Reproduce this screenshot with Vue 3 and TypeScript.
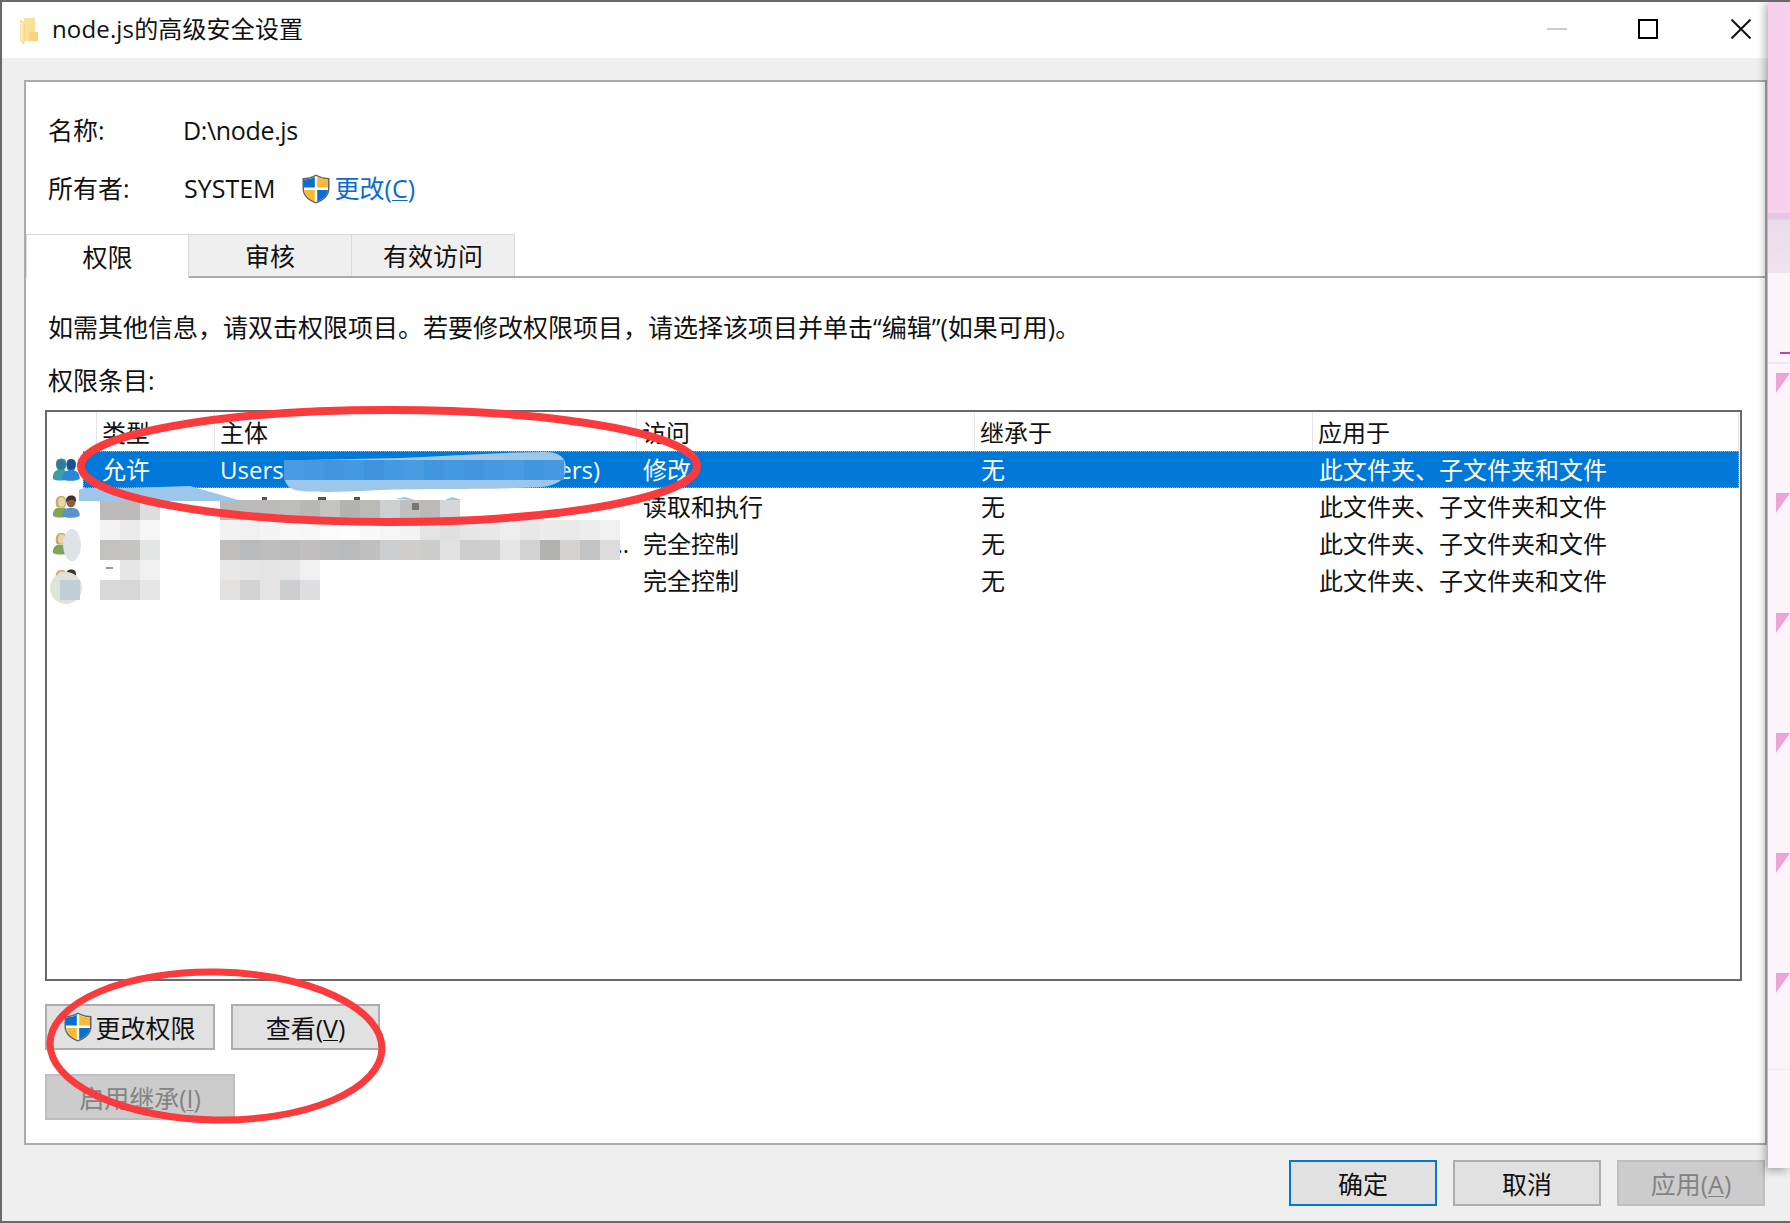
<script setup lang="ts">
import { computed } from 'vue'

interface Row { type: string; who: string; access: string; from: string; to: string; sel: boolean }
const rows: Row[] = [
  { type: '允许', who: 'Users', access: '修改', from: '无', to: '此文件夹、子文件夹和文件', sel: true },
  { type: '', who: '', access: '读取和执行', from: '无', to: '此文件夹、子文件夹和文件', sel: false },
  { type: '', who: '', access: '完全控制', from: '无', to: '此文件夹、子文件夹和文件', sel: false },
  { type: '', who: '', access: '完全控制', from: '无', to: '此文件夹、子文件夹和文件', sel: false },
]
const heads = ['类型', '主体', '访问', '继承于', '应用于']
const triangles = [373, 493, 613, 733, 853, 973]

interface Band { x: number; y: number; c: string[] }
const bands: Band[] = [
  { x: 284, y: 460, c: ['#4a9ce2','#4599e0','#4096df','#4599e0','#3f93dd','#4599e0','#4a9ce2','#4096df','#4599e0','#4196df','#4599e0','#4a9ce2','#4096df','#4599e0'] },
  { x: 100, y: 500, c: ['#bdbab9','#bcbbba','#dcdddc'] },
  { x: 220, y: 500, c: ['#bcb8b7','#bcbabb','#bdbbb9','#c0bcbc','#b9b8b7','#c5c2bf','#b3b3b2','#bcbab6','#cdd0d2','#bfc0bf','#bcb9b6','#d5d6d8'] },
  { x: 100, y: 520, c: ['#f3f3f3','#ebebeb','#f6f6f6'] },
  { x: 220, y: 520, c: ['#f2f2f2','#f0f0f0','#f4f4f4','#f8f8f8','#f6f6f6','#fbfbfb','#fdfdfd','#f9f9f9','#f5f5f5','#f4f4f4','#e4e4e4','#e0e0e0','#e6e6e6','#e8e8e8','#eeeeee','#e8e8e8','#ececec','#eaeaea','#ededed','#eff0ef'] },
  { x: 100, y: 540, c: ['#c3c2c1','#c5c4c3','#e3e4e4'] },
  { x: 220, y: 540, c: ['#c0bebd','#b9babb','#bebdbd','#bdbcbc','#c2bfc0','#bcbcbc','#b8babc','#c0c0c0','#ccced0','#cfcecc','#cccccb','#e1e1e1','#cdcdcd','#cecece','#e6e6e6','#d2d2d2','#b2b2b0','#d6d2d0','#c1c3c4','#dcdcdc'] },
  { x: 120, y: 560, c: ['#e6e6e6','#f0f0f0'] },
  { x: 220, y: 560, c: ['#e8e8e8','#e6e6e6','#e4e4e4','#e6e6e6','#f0f0f0'] },
  { x: 100, y: 580, c: ['#d9d9d9','#d7d7d7','#e6e6e6'] },
  { x: 220, y: 580, c: ['#e2e1df','#d3d3d3','#e5e4e2','#cdced0','#dfdfe1'] },
]
const cells = computed(() =>
  bands.flatMap((b, i) => b.c.map((fill, j) => ({ key: `${i}-${j}`, x: b.x + j * 20, y: b.y, fill }))),
)
</script>

<template>
  <div class="window" lang="zh-CN">
    <header class="titlebar">
      <svg class="folder" viewBox="0 0 18 26" width="18" height="26">
        <path d="M4 0 H15 V14 H18 V23 H4 Z" fill="#f5d67c" />
        <path d="M4 0 H15 V14 H9 V23 H4 Z" fill="#f9e19a" />
        <path d="M0 2 L4 4.5 V26 L0 22 Z" fill="#fcedb8" stroke="#e9c768" stroke-width="0.6" />
      </svg>
      <span class="title">node.js的高级安全设置</span>
      <div class="controls">
        <span class="ctl-min"></span>
        <span class="ctl-max"></span>
        <svg class="ctl-close" viewBox="0 0 20 20" width="20" height="20">
          <path d="M0.5 0.5 L19.5 19.5 M19.5 0.5 L0.5 19.5" stroke="#111" stroke-width="2" fill="none" />
        </svg>
      </div>
    </header>

    <main class="body">
      <section class="panel">
        <div class="meta">
          <div class="meta-row">
            <span class="meta-key">名称:</span>
            <span class="path">D:\node.js</span>
          </div>
          <div class="meta-row">
            <span class="meta-key">所有者:</span>
            <span>SYSTEM</span>
            <svg class="shield owner-shield" viewBox="0 0 28 30" width="28" height="30">
              <path d="M14 0.5 C18 3 23 4 27.5 4 V15 C27.5 22 21 27 14 29.5 C7 27 0.5 22 0.5 15 V4 C5 4 10 3 14 0.5 Z" fill="#5f6368" />
              <path d="M14 2 C18 4.4 22.4 5.3 26 5.4 V15 C26 21 20.5 25.4 14 28 C7.5 25.4 2 21 2 15 V5.4 C5.6 5.3 10 4.4 14 2 Z" fill="#fff" />
              <path d="M12.8 2.8 C9.5 4.6 5.8 5.3 2 5.4 V13.6 H12.8 Z" fill="#0a6fd0" />
              <path d="M15.2 2.8 C18.5 4.6 22.2 5.3 26 5.4 V13.6 H15.2 Z" fill="#fdb933" />
              <path d="M2 16 H12.8 V27.5 C7 25 2.4 21 2 16 Z" fill="#fdb933" />
              <path d="M15.2 16 H26 C25.6 21 21 25 15.2 27.5 Z" fill="#0a6fd0" />
            </svg>
            <a class="link">更改(<u>C</u>)</a>
          </div>
        </div>

        <nav class="tabs">
          <span class="tab active">权限</span>
          <span class="tab">审核</span>
          <span class="tab">有效访问</span>
        </nav>

        <div class="content">
          <p class="hint">如需其他信息，请双击权限项目。若要修改权限项目，请选择该项目并单击“编辑”(如果可用)。</p>
          <p class="entries">权限条目:</p>

          <div class="list">
            <div class="row head">
              <span class="cell c0"></span>
              <span v-for="(h, i) in heads" :key="h" class="cell" :class="'c' + (i + 1)">{{ h }}</span>
            </div>
            <div v-for="(r, i) in rows" :key="i" class="row item" :class="{ selected: r.sel }">
              <span class="cell c0">
                <svg viewBox="0 0 28 23" width="28" height="23">
                  <template v-if="r.sel">
                    <path d="M1 21 C0.5 15 3 12.5 6 12 C3.5 10 3.5 3 5 2 C7 0 12 0 13.5 2 C15 4 15 10 12 12 C14 12.5 16 14 16 21 C11 23 5 23 1 21 Z" fill="#3c9fa8" />
                    <ellipse cx="9" cy="6.5" rx="4.6" ry="5.2" fill="#2f7d94" />
                    <path d="M10 21.5 C10 16 11.5 14 16 12.8 C14 10 14 3 16.5 1.6 C18.5 0.6 21.5 0.8 23 2.6 C24.5 5 24 10 22 12.6 C25.5 13.4 27.6 15 27.8 21 C23 23.4 15 23.4 10 21.5 Z" fill="#2c87d6" />
                    <ellipse cx="19.2" cy="6.4" rx="4.6" ry="5.4" fill="#1d5288" />
                  </template>
                  <template v-else>
                    <path d="M1 21 C0.5 16 3 13 6.5 12.4 L11.5 12.4 C14 13 16 15 16 21 C11 23 5 23 1 21 Z" fill="#7fa653" />
                    <path d="M4 11 C3.4 6 3.4 1.6 9 0.8 C13.6 0.8 14.6 4 14 9 L13 12 H5 Z" fill="#c7ad6c" />
                    <ellipse cx="9.6" cy="7" rx="3.6" ry="4.8" fill="#eed3a8" />
                    <path d="M10.5 21.5 C10 16.5 12 14 16 13 L22.4 13 C25.6 13.8 27.6 16 27.8 21 C23 23.4 15 23.4 10.5 21.5 Z" fill="#5c93c9" />
                    <ellipse cx="19" cy="6.8" rx="4.6" ry="5.6" fill="#8e5f3e" />
                    <path d="M14.2 7 C13.4 2 16.4 0.4 19.4 0.4 C23 0.4 24.6 3 24 7 C22.6 4.6 18 3.4 14.2 7 Z" fill="#3c3230" />
                  </template>
                </svg>
              </span>
              <span class="cell c1">{{ r.type }}</span>
              <span class="cell c2 who">
                <span>{{ r.who }}</span>
                <span v-if="i === 0" class="who-end">ers)</span>
                <span v-if="i === 2" class="who-dots">..</span>
              </span>
              <span class="cell c3">{{ r.access }}</span>
              <span class="cell c4">{{ r.from }}</span>
              <span class="cell c5">{{ r.to }}</span>
            </div>
          </div>

          <div class="actions">
            <button class="btn btn-change">
              <svg class="shield" viewBox="0 0 28 30" width="28" height="30">
                <path d="M14 0.5 C18 3 23 4 27.5 4 V15 C27.5 22 21 27 14 29.5 C7 27 0.5 22 0.5 15 V4 C5 4 10 3 14 0.5 Z" fill="#5f6368" />
                <path d="M14 2 C18 4.4 22.4 5.3 26 5.4 V15 C26 21 20.5 25.4 14 28 C7.5 25.4 2 21 2 15 V5.4 C5.6 5.3 10 4.4 14 2 Z" fill="#fff" />
                <path d="M12.8 2.8 C9.5 4.6 5.8 5.3 2 5.4 V13.6 H12.8 Z" fill="#0a6fd0" />
                <path d="M15.2 2.8 C18.5 4.6 22.2 5.3 26 5.4 V13.6 H15.2 Z" fill="#fdb933" />
                <path d="M2 16 H12.8 V27.5 C7 25 2.4 21 2 16 Z" fill="#fdb933" />
                <path d="M15.2 16 H26 C25.6 21 21 25 15.2 27.5 Z" fill="#0a6fd0" />
              </svg>
              <span class="btn-label">更改权限</span>
            </button>
            <button class="btn btn-view"><span class="btn-label">查看(<u>V</u>)</span></button>
          </div>
          <button class="btn btn-inherit disabled"><span class="btn-label">启用继承(<u>I</u>)</span></button>
        </div>
      </section>

      <footer class="footer">
        <button class="btn btn-foot primary"><span class="btn-label">确定</span></button>
        <button class="btn btn-foot"><span class="btn-label">取消</span></button>
        <button class="btn btn-foot disabled"><span class="btn-label">应用(<u>A</u>)</span></button>
      </footer>
    </main>

    <aside class="sidebar">
      <div class="side-top"></div>
      <div class="side-fade"></div>
      <div class="side-rule"></div>
      <div class="side-line"></div>
      <div v-for="y in triangles" :key="y" class="tri" :style="{ top: y + 'px' }"></div>
      <div class="side-foot"></div>
    </aside>

    <svg class="marks" viewBox="0 0 1790 1223" width="1790" height="1223">
      <path d="M284 475 C284 464 292 460 304 460 L400 458 C450 456 500 452 545 452 C560 452 566 458 566 468 C566 480 556 486 540 487 C480 490 420 488 380 490 C350 492 310 493 295 490 C288 488 284 482 284 475 Z" fill="#9cc6ea" />
      <rect v-for="c in cells" :key="c.key" :x="c.x" :y="c.y" width="20" height="20" :fill="c.fill" />
      <path d="M79 490 L84 488 H130 L190 486 L235 499 L240 501 H79 Z" fill="#9cc6ea" />
      <path d="M395 499 L405 497 L415 500 Z M445 500 L452 497 L462 500 Z" fill="#9cc6ea" />
      <rect x="262" y="497" width="5" height="3" fill="#555" />
      <rect x="318" y="497" width="8" height="3" fill="#555" />
      <rect x="354" y="497" width="6" height="3" fill="#555" />
      <rect x="412" y="503" width="7" height="7" fill="#777" />
      <rect x="106" y="567" width="7" height="2" fill="#999" />
      <ellipse cx="389" cy="466" rx="308" ry="56" fill="none" stroke="#f93b3e" stroke-width="8" />
      <ellipse cx="216" cy="1046" rx="166" ry="74" fill="none" stroke="#f93b3e" stroke-width="7" transform="rotate(1 216 1046)" />
      <ellipse cx="72" cy="545" rx="9" ry="16" fill="#dfe2e6" />
      <ellipse cx="66" cy="588" rx="16" ry="16" fill="#dfe3d8" />
      <rect x="60" y="580" width="20" height="20" fill="#c2ced6" />
    </svg>
  </div>
</template>

<style>
html, body { margin: 0; padding: 0; background: #efefef; }
</style>

<style scoped>
.window {
  position: relative;
  width: 1790px;
  height: 1223px;
  box-sizing: border-box;
  border: 2px solid #696969;
  border-right: none;
  display: flex;
  flex-direction: column;
  overflow: hidden;
  background: #efefef;
  color: #111;
  font-family: "Open Sans", "Noto Sans CJK SC", sans-serif;
  font-size: 25px;
  line-height: 34px;
}
.titlebar {
  flex: none;
  height: 56px;
  background: #fff;
  display: flex;
  align-items: center;
  padding-left: 18px;
  box-sizing: border-box;
  font-size: 24px;
}
.folder { flex: none; margin-top: 2px; }
.title { margin-left: 14px; margin-top: -2px; letter-spacing: 0.15px; }
.controls {
  margin-left: auto;
  display: flex;
  align-items: center;
  padding-right: 39px;
  margin-top: -2px;
}
.ctl-min { width: 20px; height: 2px; background: #ccc; margin-right: 71px; display: block; }
.ctl-max { width: 20px; height: 20px; box-sizing: border-box; border: 2px solid #000; margin-right: 73px; display: block; }
.ctl-close { display: block; }

.body {
  flex: 1;
  min-height: 0;
  display: flex;
  flex-direction: column;
  padding: 22px 0 0 22px;
}
.panel {
  flex: none;
  height: 1065px;
  width: 1743px;
  box-sizing: border-box;
  background: #fff;
  border: 2px solid #ababab;
  display: flex;
  flex-direction: column;
}
.meta {
  padding: 31px 0 0 22px;
  display: flex;
  flex-direction: column;
  gap: 24px;
}
.meta-row { display: flex; align-items: center; height: 34px; }
.meta-key { width: 136px; flex: none; }
.path { letter-spacing: -0.35px; margin-left: -1px; }
.owner-shield { margin-left: 26px; margin-top: 1px; }
.shield { flex: none; display: block; }
.link { color: #0a6cd0; margin-left: 5px; }
.tabs {
  margin-top: 29px;
  height: 44px;
  box-sizing: border-box;
  display: flex;
  border-bottom: 2px solid #ababab;
}
.tab {
  width: 164px;
  height: 42px;
  box-sizing: border-box;
  background: #efefef;
  border: 1px solid #d9d9d9;
  border-bottom: none;
  display: flex;
  align-items: center;
  justify-content: center;
  margin-left: -1px;
}
.tab:first-child { margin-left: 0; width: 163px; }
.tab.active {
  background: #fff;
  height: 44px;
  position: relative;
  z-index: 1;
}
.content {
  flex: 1;
  display: flex;
  flex-direction: column;
  align-items: flex-start;
  padding: 33px 23px 0 19px;
}
.hint, .entries { margin: 0 0 0 3px; white-space: nowrap; }
.hint { margin-top: -1px; }
.entries { margin-top: 19px; }
.list {
  margin-top: 13px;
  width: 1697px;
  height: 571px;
  box-sizing: border-box;
  border: 2px solid #696969;
  flex: none;
  font-size: 24px;
}
.row { display: flex; width: 1692px; }
.head { height: 39px; align-items: center; border-right: 1px solid #e5e5e5; box-sizing: border-box; }
.head .cell { height: 39px; border-left: 1px solid #e5e5e5; box-sizing: border-box; padding-top: 4px; padding-left: 5px; }
.head .c0 { border-left: none; }
.item { height: 37px; align-items: center; position: relative; }
.cell { display: block; flex: none; padding-left: 6px; box-sizing: border-box; white-space: nowrap; }
.c0 { width: 49px; padding-left: 5px; }
.item .c0 { height: 37px; display: flex; align-items: center; }
.c0 svg { display: block; }
.c1 { width: 118px; }
.c2 { width: 422px; }
.c3 { width: 338px; }
.c4 { width: 338px; }
.c5 { flex: 1; }
.item .c3, .item .c4, .item .c5 { padding-left: 7px; }
.who { display: flex; }
.who-end { margin-left: auto; margin-right: 36px; }
.who-dots { margin-left: auto; margin-right: 7px; }
.selected { background: linear-gradient(to right, transparent 36px, #0078d7 36px); color: #fff; }
.selected::after {
  content: "";
  position: absolute;
  left: 36px;
  right: 0;
  top: 0;
  bottom: 0;
  border: 1px dotted #e8a050;
  pointer-events: none;
}
.item .cell:not(.c0) { line-height: 37px; }
.actions { display: flex; gap: 16px; margin-top: 23px; }
.btn {
  font: inherit;
  color: #111;
  height: 46px;
  box-sizing: border-box;
  background: #e1e1e1;
  border: 2px solid #adadad;
  padding: 0;
  margin: 0;
  display: inline-flex;
  align-items: center;
  justify-content: center;
}
.btn-label { display: block; padding-top: 2px; }
.btn-change { width: 170px; gap: 3px; }
.btn-view { width: 149px; }
.btn-inherit { width: 190px; margin-top: 24px; }
.btn.disabled { background: #ccc; border-color: #bfbfbf; color: #838383; }
u { text-underline-offset: 2px; text-decoration-thickness: 1px; }
.footer {
  flex: 1;
  display: flex;
  justify-content: flex-end;
  padding: 15px 25px 0 0;
  gap: 16px;
  align-items: flex-start;
}
.btn-foot { width: 148px; }
.primary { border-color: #0078d7; }

.sidebar {
  position: absolute;
  top: -2px;
  left: 1766px;
  width: 22px;
  height: 1168px;
  background: #fdf3fb;
  box-shadow: -3px 3px 9px rgba(0, 0, 0, 0.3);
  overflow: hidden;
}
.side-top { height: 213px; background: #f8d0ee; }
.side-fade { height: 60px; background: linear-gradient(#e6c6e2 0 5px, #eadcea 8px, #efe3ee 100%); }
.side-rule { position: absolute; top: 352px; left: 12px; width: 10px; height: 2px; background: #c0459c; }
.side-line { position: absolute; top: 362px; left: 0; width: 22px; height: 2px; background: #ececec; }
.tri {
  position: absolute;
  left: 8px;
  width: 14px;
  height: 20px;
  background: #eba4d6;
  clip-path: polygon(0 0, 100% 0, 0 100%);
}
.side-foot { position: absolute; top: 1069px; left: 0; width: 22px; height: 1px; background: #f0e6ee; }
.marks { position: absolute; top: -2px; left: -2px; pointer-events: none; }
</style>
